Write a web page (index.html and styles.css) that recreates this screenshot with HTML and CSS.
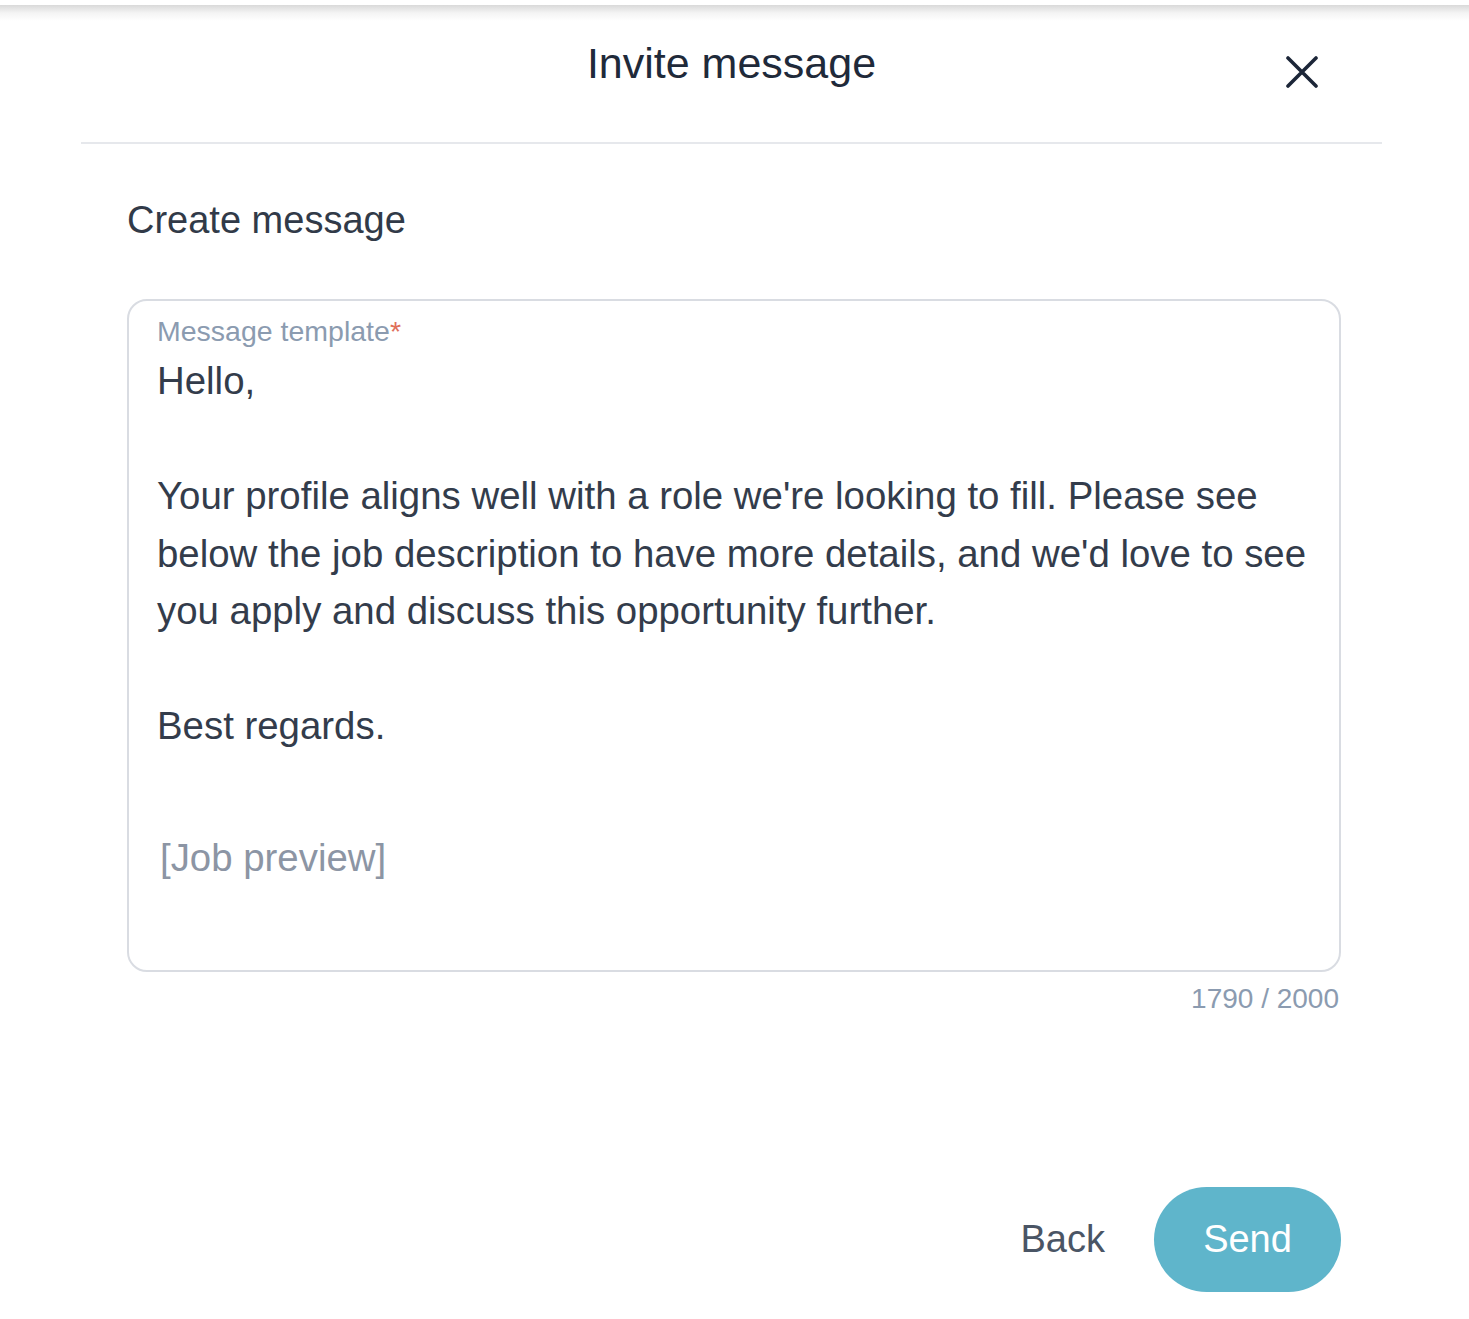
FILE: index.html
```html
<!DOCTYPE html>
<html lang="en">
<head>
<meta charset="utf-8">
<title>Invite message</title>
<link rel="stylesheet" href="styles.css">
</head>
<body>
<div class="topshadow"></div>
<div class="modal">
  <header class="modal-header">
    <span class="spacer"></span>
    <h1 class="title">Invite message</h1>
    <button class="close" aria-label="Close">
      <svg width="32" height="32" viewBox="0 0 32 32"><path d="M2 2 L30 30 M30 2 L2 30" stroke="#1c2638" stroke-width="3.6" stroke-linecap="round" fill="none"/></svg>
    </button>
  </header>
  <div class="divider"></div>
  <main class="content">
    <h2 class="section-title">Create message</h2>
    <div class="field">
      <div class="field-label">Message template<span class="req">*</span></div>
      <div class="field-text">
        <p>Hello,</p>
        <p class="blank">&nbsp;</p>
        <p>Your profile aligns well with a role we're looking to fill. Please see below the job description to have more details, and we'd love to see you apply and discuss this opportunity further.</p>
        <p class="blank">&nbsp;</p>
        <p>Best regards.</p>
      </div>
      <div class="job-preview">[Job preview]</div>
    </div>
    <div class="counter">1790 / 2000</div>
    <div class="actions">
      <button class="btn-back">Back</button>
      <button class="btn-send">Send</button>
    </div>
  </main>
</div>
</body>
</html>
```

FILE: styles.css
```css
html, body {
  margin: 0;
  padding: 0;
  background: #ffffff;
}
body {
  font-family: "Liberation Sans", Arial, sans-serif;
  color: #333c4b;
}
.topshadow {
  margin-top: 5px;
  height: 16px;
  background: linear-gradient(#d9d9d9, #f4f4f4 50%, #ffffff);
}
.modal {
  padding: 0 87px 0 81px;
}
.modal-header {
  display: grid;
  grid-template-columns: 1fr auto 1fr;
  padding-top: 17px;
  height: 121px;
  box-sizing: border-box;
}
.title {
  margin: 0;
  font-size: 43px;
  line-height: 50px;
  font-weight: 400;
  color: #1f2a3a;
  white-space: nowrap;
}
.close {
  justify-self: end;
  align-self: start;
  margin: 18px 64px 0 0;
  padding: 0;
  border: 0;
  background: none;
  width: 32px;
  height: 32px;
  display: flex;
}
.divider {
  height: 2px;
  background: #e6e8ec;
}
.content {
  padding: 0 41px 0 46px;
}
.section-title {
  margin: 53px 0 0 0;
  font-size: 38px;
  line-height: 46px;
  font-weight: 400;
  color: #313a48;
}
.field {
  margin-top: 56px;
  border: 2px solid #d9dce2;
  border-radius: 20px;
  padding: 13px 28px 84px 28px;
  height: 673px;
  box-sizing: border-box;
}
.field-label {
  font-size: 28.5px;
  line-height: 34px;
  color: #8b9bb0;
}
.req {
  color: #e0705a;
}
.field-text {
  margin-top: 4px;
  font-size: 38.4px;
  line-height: 57.5px;
  color: #333c4b;
}
.field-text p {
  margin: 0;
}
.job-preview {
  margin-top: 74px;
  margin-left: 3px;
  font-size: 38.4px;
  line-height: 57.5px;
  color: #8c95a4;
}
.counter {
  margin-top: 10px;
  text-align: right;
  padding-right: 2px;
  font-size: 28px;
  line-height: 34px;
  color: #8b9bb0;
}
.actions {
  margin-top: 171px;
  display: flex;
  justify-content: flex-end;
  align-items: center;
  gap: 49px;
}
.btn-back {
  border: 0;
  background: none;
  padding: 0;
  font-family: inherit;
  font-size: 38px;
  color: #4a5565;
}
.btn-send {
  border: 0;
  background: #5fb5cb;
  color: #ffffff;
  font-family: inherit;
  font-size: 38px;
  width: 187px;
  height: 105px;
  border-radius: 53px;
  padding: 0;
}
```
